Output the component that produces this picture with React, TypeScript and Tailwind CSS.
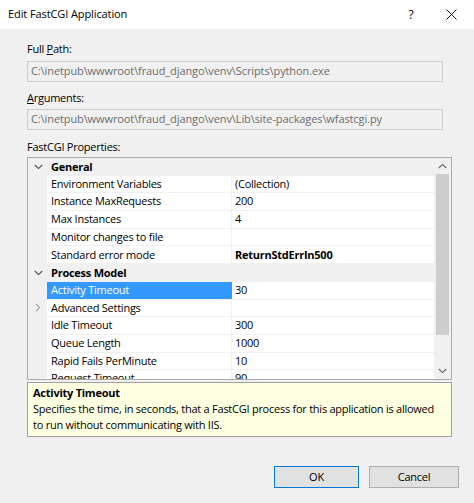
import React from "react";

type Row = {
  cat?: boolean;
  name: string;
  value?: string;
  bold?: boolean;
  selected?: boolean;
  expandable?: boolean;
};

const rows: Row[] = [
  { cat: true, name: "General" },
  { name: "Environment Variables", value: "(Collection)" },
  { name: "Instance MaxRequests", value: "200" },
  { name: "Max Instances", value: "4" },
  { name: "Monitor changes to file", value: "" },
  { name: "Standard error mode", value: "ReturnStdErrIn500", bold: true },
  { cat: true, name: "Process Model" },
  { name: "Activity Timeout", value: "30", selected: true },
  { name: "Advanced Settings", value: "", expandable: true },
  { name: "Idle Timeout", value: "300" },
  { name: "Queue Length", value: "1000" },
  { name: "Rapid Fails PerMinute", value: "10" },
  { name: "Request Timeout", value: "90" },
];

function ChevronDown({ color = "#555" }: { color?: string }) {
  return (
    <svg width="9" height="6" viewBox="0 0 9 6">
      <polyline points="0.8,1 4.5,4.6 8.2,1" fill="none" stroke={color} strokeWidth="1.1" />
    </svg>
  );
}
function ChevronUp({ color = "#555" }: { color?: string }) {
  return (
    <svg width="9" height="6" viewBox="0 0 9 6">
      <polyline points="0.8,5 4.5,1.4 8.2,5" fill="none" stroke={color} strokeWidth="1.1" />
    </svg>
  );
}
function ChevronRight({ color = "#a0a0a0" }: { color?: string }) {
  return (
    <svg width="6" height="9" viewBox="0 0 6 9">
      <polyline points="1,0.8 4.6,4.5 1,8.2" fill="none" stroke={color} strokeWidth="1.1" />
    </svg>
  );
}

export default function App() {
  return (
    <div className="w-[474px] h-[503px] bg-[#f0f0f0] flex flex-col overflow-hidden text-black font-['Open_Sans',sans-serif] text-[11px] tracking-[-0.25px]">
      {/* Title bar */}
      <div className="h-[29px] bg-white flex items-center shrink-0">
        <div className="pl-[8px] text-[11px] tracking-[-0.1px] flex-1">Edit FastCGI Application</div>
        <div className="w-[20px] text-center text-[12px] mr-[24px]">?</div>
        <div className="w-[12px] mr-[17px] flex items-center justify-center">
          <svg width="11" height="11" viewBox="0 0 11 11">
            <line x1="0.5" y1="0.5" x2="10.5" y2="10.5" stroke="#111" strokeWidth="1" />
            <line x1="10.5" y1="0.5" x2="0.5" y2="10.5" stroke="#111" strokeWidth="1" />
          </svg>
        </div>
      </div>

      <div className="flex flex-col pl-[27px] pt-[12px]">
        <div className="h-[16px] leading-[16px]">
          Full <span className="underline">P</span>ath:
        </div>
        <div className="mt-[4px] w-[416px] h-[21px] border border-[#cccccc] bg-[#f0f0f0] flex items-center pl-[3px] text-[#6d6d6d] tracking-[-0.1px]">
          C:\inetpub\wwwroot\fraud_django\venv\Scripts\python.exe
        </div>

        <div className="mt-[8px] h-[16px] leading-[16px]">
          <span className="underline">A</span>rguments:
        </div>
        <div className="mt-[3px] w-[416px] h-[21px] border border-[#cccccc] bg-[#f0f0f0] flex items-center pl-[3px] text-[#6d6d6d] tracking-[-0.1px]">
          C:\inetpub\wwwroot\fraud_django\venv\Lib\site-packages\wfastcgi.py
        </div>

        <div className="mt-[9px] h-[16px] leading-[16px]">FastCGI Properties:</div>

        {/* Property grid */}
        <div className="mt-[2px] w-[425px] h-[223px] border border-[#ababab] bg-[#f0f0f0] flex">
          <div className="flex-1 flex flex-col overflow-hidden">
            {rows.map((r, i) =>
              r.cat ? (
                <div key={i} className="h-[17.7px] shrink-0 flex items-center bg-[#f0f0f0]">
                  <div className="w-[19px] flex items-center justify-center pl-[1px]">
                    <ChevronDown color="#4d4d4d" />
                  </div>
                  <div className="pl-[4px] font-bold">{r.name}</div>
                </div>
              ) : (
                <div key={i} className="h-[17.7px] shrink-0 flex bg-[#f0f0f0] pb-[1px]">
                  <div className="w-[19px] flex items-center justify-center">
                    {r.expandable ? <ChevronRight /> : null}
                  </div>
                  <div
                    className={
                      r.selected
                        ? "w-[185px] bg-[#3399ff] text-white flex items-center pl-[4px]"
                        : "w-[184px] mr-[1px] bg-white flex items-center pl-[4px]"
                    }
                  >
                    {r.name}
                  </div>
                  <div className={"flex-1 bg-white flex items-center pl-[3px]" + (r.bold ? " font-bold" : "")}>
                    {r.value}
                  </div>
                </div>
              )
            )}
          </div>
          {/* Scrollbar */}
          <div className="w-[17px] flex flex-col bg-[#f0f0f0]">
            <div className="h-[16px] flex items-center justify-center">
              <ChevronUp color="#606060" />
            </div>
            <div className="flex-1">
              <div className="mx-[2px] h-[161px] bg-[#cdcdcd]" />
            </div>
            <div className="h-[17px] flex items-center justify-center">
              <ChevronDown color="#606060" />
            </div>
          </div>
        </div>

        {/* Description */}
        <div className="mt-[2px] w-[425px] h-[55px] border border-[#a0a0a0] bg-[#ffffe1] pl-[5px] pt-[2px] leading-[16px]">
          <div className="font-bold">Activity Timeout</div>
          <div>
            Specifies the time, in seconds, that a FastCGI process for this application is allowed
            <br />
            to run without communicating with IIS.
          </div>
        </div>
      </div>

      {/* Buttons */}
      <div className="mt-[29px] flex justify-end pr-[15px] gap-[10px]">
        <div className="w-[85px] h-[22px] border border-[#0078d7] bg-[#e1e1e1] flex items-center justify-center">
          OK
        </div>
        <div className="w-[90px] h-[22px] border border-[#adadad] bg-[#e1e1e1] flex items-center justify-center">
          Cancel
        </div>
      </div>
    </div>
  );
}
